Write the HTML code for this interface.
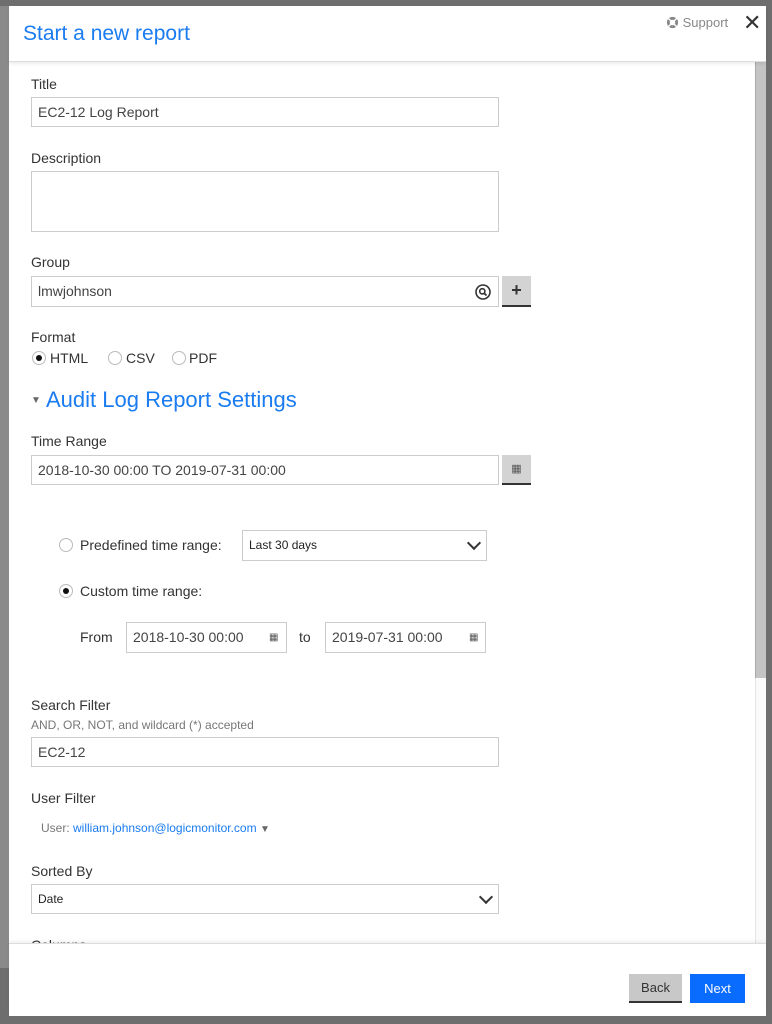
<!DOCTYPE html>
<html><head><style>
*{box-sizing:border-box;margin:0;padding:0}
body{width:772px;height:1024px;background:#6e6e6e;font-family:"Liberation Sans",sans-serif;position:relative;overflow:hidden;color:#333}
.bgl{position:absolute;left:0;top:6px;width:10px;height:962px;background:#8a8a8a}
.modal{position:absolute;left:9px;top:6px;width:757px;height:1010px;background:#fff}
.hdr{position:absolute;left:0;top:0;width:757px;height:56px;border-bottom:1px solid #ddd;box-shadow:0 2px 3px rgba(0,0,0,.08);background:#fff;z-index:2}
.hdr h1{position:absolute;left:14px;top:16px;font-size:21px;font-weight:normal;color:#1a7cf0}
.sup{position:absolute;left:657px;top:9px;font-size:13px;color:#888}
.x{position:absolute;left:734px;top:4px;font-size:22px;color:#333}
.a{position:absolute;font-size:14px;color:#333;white-space:nowrap}
.in{position:absolute;border:1px solid #ccc;background:#fff;font-size:14px;color:#444;padding-left:6px;white-space:nowrap}
.btn{position:absolute;background:#d3d3d3;border-bottom:2px solid #333}
.rad{position:absolute;width:14px;height:14px;border:1px solid #bbb;border-radius:50%;background:#fff}
.rad.on::after{content:"";position:absolute;left:3px;top:3px;width:6px;height:6px;border-radius:50%;background:#111}
.sb{position:absolute;left:746px;top:56px;width:11px;height:882px;background:#fafafa;border-left:1px solid #e5e5e5}
.th{position:absolute;left:746px;top:56px;width:11px;height:616px;background:#c4c4c4;border-left:1px solid #aaa}
.ftr{position:absolute;left:0;top:937px;width:757px;height:73px;background:#fff;border-top:1px solid #ddd;box-shadow:0 -2px 3px rgba(0,0,0,.06)}
.chev{position:absolute;width:10px;height:10px;border-right:2px solid #333;border-bottom:2px solid #333;transform:rotate(45deg)}
.cal{position:absolute;font-size:10px;color:#555}
</style></head><body>
<div class="bgl"></div>
<div class="modal">
<div class="hdr"><h1>Start a new report</h1>
<div class="sup"><svg width="13" height="13" viewBox="0 0 14 14" style="vertical-align:-2px"><circle cx="7" cy="7" r="6" fill="#888"/><circle cx="7" cy="7" r="3" fill="#fff"/><path d="M2 2l3 3M12 2l-3 3M2 12l3-3M12 12l-3-3" stroke="#fff" stroke-width="1.5"/></svg> Support</div>
<div class="x">✕</div></div>

<div class="a" style="left:22px;top:70px">Title</div>
<div class="in" style="left:22px;top:91px;width:468px;height:30px;line-height:28px">EC2-12 Log Report</div>
<div class="a" style="left:22px;top:144px">Description</div>
<div class="in" style="left:22px;top:165px;width:468px;height:61px"></div>
<div class="a" style="left:22px;top:248px">Group</div>
<div class="in" style="left:22px;top:270px;width:468px;height:31px;line-height:29px">lmwjohnson<svg style="position:absolute;left:443px;top:7px" width="16" height="16" viewBox="0 0 16 16"><circle cx="8" cy="8" r="7" fill="none" stroke="#333" stroke-width="1.6"/><circle cx="7.3" cy="7.3" r="2.6" fill="none" stroke="#333" stroke-width="1.6"/><path d="M9.2 9.2l2.3 2.3" stroke="#333" stroke-width="1.8"/></svg></div>
<div class="btn" style="left:493px;top:270px;width:29px;height:31px;text-align:center;font-size:18px;font-weight:bold;line-height:28px">+</div>
<div class="a" style="left:22px;top:323px">Format</div>
<div class="rad on" style="left:23px;top:345px"></div><div class="a" style="left:41px;top:344px">HTML</div>
<div class="rad" style="left:99px;top:345px"></div><div class="a" style="left:117px;top:344px">CSV</div>
<div class="rad" style="left:163px;top:345px"></div><div class="a" style="left:180px;top:344px">PDF</div>
<div class="a" style="left:22px;top:389px;font-size:10px;color:#666">▼</div>
<div class="a" style="left:37px;top:381px;font-size:22px;color:#1a7cf0">Audit Log Report Settings</div>
<div class="a" style="left:22px;top:427px">Time Range</div>
<div class="in" style="left:22px;top:449px;width:468px;height:30px;line-height:28px">2018-10-30 00:00 TO 2019-07-31 00:00</div>
<div class="btn" style="left:493px;top:449px;width:29px;height:30px;text-align:center;font-size:11px;line-height:28px;color:#555">▦</div>

<div class="rad" style="left:50px;top:532px"></div><div class="a" style="left:71px;top:531px">Predefined time range:</div>
<div class="in" style="left:233px;top:524px;width:245px;height:31px;line-height:29px;font-size:12px;color:#222">Last 30 days</div>
<div class="chev" style="left:460px;top:532px"></div>
<div class="rad on" style="left:50px;top:578px"></div><div class="a" style="left:71px;top:577px">Custom time range:</div>
<div class="a" style="left:71px;top:623px">From</div>
<div class="in" style="left:117px;top:616px;width:161px;height:31px;line-height:29px">2018-10-30 00:00</div><div class="cal" style="left:260px;top:626px">▦</div>
<div class="a" style="left:290px;top:623px">to</div>
<div class="in" style="left:316px;top:616px;width:161px;height:31px;line-height:29px">2019-07-31 00:00</div><div class="cal" style="left:460px;top:626px">▦</div>

<div class="a" style="left:22px;top:691px">Search Filter</div>
<div class="a" style="left:22px;top:712px;font-size:12px;color:#777">AND, OR, NOT, and wildcard (*) accepted</div>
<div class="in" style="left:22px;top:731px;width:468px;height:30px;line-height:28px">EC2-12</div>
<div class="a" style="left:22px;top:784px">User Filter</div>
<div class="a" style="left:32px;top:815px;font-size:12px;color:#777">User: <span style="color:#1a7cf0">william.johnson@logicmonitor.com</span> <span style="font-size:10px;color:#666">▼</span></div>
<div class="a" style="left:22px;top:857px">Sorted By</div>
<div class="in" style="left:22px;top:878px;width:468px;height:30px;line-height:28px;font-size:12px;color:#222">Date</div>
<div class="chev" style="left:472px;top:886px"></div>
<div class="a" style="left:22px;top:931px">Columns</div>

<div class="sb"></div><div class="th"></div>
<div class="ftr">
<div style="position:absolute;left:620px;top:30px;width:53px;height:29px;background:#c8c8c8;border-bottom:2px solid #333;text-align:center;line-height:28px;font-size:13px;color:#333">Back</div>
<div style="position:absolute;left:681px;top:30px;width:55px;height:29px;background:#0a6cff;text-align:center;line-height:29px;font-size:13px;color:#fff">Next</div>
</div>
</div>
</body></html>
